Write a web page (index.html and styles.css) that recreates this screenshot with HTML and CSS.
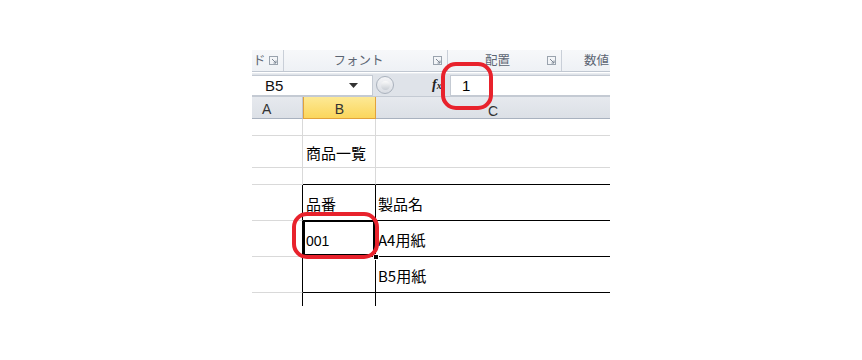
FILE: index.html
```html
<!DOCTYPE html>
<html lang="ja">
<head>
<meta charset="utf-8">
<title>Excel</title>
<link rel="stylesheet" href="styles.css">
</head>
<body>
<div class="shot">
  <div class="ribbon">
    <div class="grp g1"><span class="lbl lbl-r">ド</span><span class="launch"><svg width="9" height="9" viewBox="0 0 9 9"><rect x="0.5" y="0.5" width="8" height="8" fill="none" stroke="#9aa3ae"/><path d="M3 3 L7 7 M7 4.5 V7 H4.5" fill="none" stroke="#7d8794" stroke-width="1"/></svg></span></div>
    <div class="grp g2"><span class="lbl">フォント</span><span class="launch"><svg width="9" height="9" viewBox="0 0 9 9"><rect x="0.5" y="0.5" width="8" height="8" fill="none" stroke="#9aa3ae"/><path d="M3 3 L7 7 M7 4.5 V7 H4.5" fill="none" stroke="#7d8794" stroke-width="1"/></svg></span></div>
    <div class="grp g3"><span class="lbl">配置</span><span class="launch"><svg width="9" height="9" viewBox="0 0 9 9"><rect x="0.5" y="0.5" width="8" height="8" fill="none" stroke="#9aa3ae"/><path d="M3 3 L7 7 M7 4.5 V7 H4.5" fill="none" stroke="#7d8794" stroke-width="1"/></svg></span></div>
    <div class="grp g4"><span class="lbl">数値</span></div>
  </div>
  <div class="fbar">
    <div class="namebox"><span class="nb-text">B5</span><svg class="nb-arrow" width="9" height="5" viewBox="0 0 9 5"><path d="M0 0 H9 L4.5 5 Z" fill="#333"/></svg></div>
    <div class="knob"><span class="knob-dot"></span></div>
    <div class="fx"><i>f</i><i class="fx-x">x</i></div>
    <div class="finput">1</div>
  </div>
  <div class="sheet">
    <div class="hd hd-a">A</div>
    <div class="hd hd-b">B</div>
    <div class="hd hd-c">C</div>

    <div class="c ca"></div>
    <div class="c cb"></div>
    <div class="c cc"></div>

    <div class="c ca"></div>
    <div class="c cb txt">商品一覧</div>
    <div class="c cc"></div>

    <div class="c ca"></div>
    <div class="c cb bb"></div>
    <div class="c cc bb"></div>

    <div class="c ca br"></div>
    <div class="c cb br bb txt">品番</div>
    <div class="c cc bb txt">製品名</div>

    <div class="c ca br"></div>
    <div class="c cb br bb txt active">001<span class="sel"></span><span class="handle"></span></div>
    <div class="c cc bb txt">A4用紙</div>

    <div class="c ca br"></div>
    <div class="c cb br bb"></div>
    <div class="c cc bb txt">B5用紙</div>

    <div class="c ca br"></div>
    <div class="c cb br nb"></div>
    <div class="c cc nb"></div>
  </div>
  <div class="mark mark-fx"></div>
  <div class="mark mark-cell"></div>
</div>
</body>
</html>
```
FILE: styles.css
```css
* { box-sizing: border-box; }
html, body { margin: 0; padding: 0; background: #fff; }
body { font-family: "Liberation Sans", "Noto Sans CJK JP", sans-serif; }

.shot {
  position: relative;
  margin: 50px 0 0 252px;
  width: 358px;
  height: 256px;
  overflow: hidden;
  background: #fff;
}

/* ribbon group labels */
.ribbon {
  display: flex;
  height: 22px;
  background: linear-gradient(#f7f8fa, #eef1f5);
  border-bottom: 1px solid #c0c7d1;
  color: #5c6573;
  font-family: "Noto Sans CJK JP", sans-serif;
  font-size: 12.5px;
}
.grp {
  display: flex;
  align-items: center;
  flex: none;
  border-right: 1px solid #c9cfd8;
  padding-bottom: 2px;
}
.g1 { width: 32px; }
.g2 { width: 164px; }
.g3 { width: 114px; }
.g4 { width: 80px; border-right: 0; padding-left: 22px; }
.lbl { flex: 1; text-align: center; white-space: nowrap; }
.g4 .lbl { flex: none; }
.lbl-r { text-align: left; padding-left: 1px; }
.launch { flex: none; width: 9px; display: flex; align-items: center; margin-right: 5px; margin-top: 2px; }

/* formula bar */
.fbar {
  display: flex;
  align-items: center;
  height: 24px;
  margin-top: 1px;
  background: #dfe3e9;
  border-top: 1px solid #e9ecf0;
  border-bottom: 1px solid #c4cad3;
}
.namebox {
  display: flex;
  align-items: center;
  width: 121px;
  height: 21px;
  background: #fff;
  border: 1px solid #c4cad3;
  border-left: 0;
  padding-left: 13px;
  font-size: 15px;
  color: #111;
}
.nb-text { flex: 1; }
.nb-arrow { margin-right: 14px; }
.knob {
  width: 18px;
  height: 18px;
  margin-left: 3px;
  border-radius: 50%;
  border: 1px solid #aab2bd;
  background: linear-gradient(#f4f5f7, #d9dde3);
  display: flex;
  align-items: center;
  justify-content: center;
}
.knob-dot { width: 9px; height: 9px; border-radius: 50%; background: linear-gradient(#fafafa, #c9ced5); }
.fx {
  margin-left: 38px;
  width: 18px;
  font-family: "Liberation Serif", serif;
  font-weight: bold;
  font-size: 14px;
  color: #222;
  display: flex;
  align-items: baseline;
}
.fx-x { font-size: 10px; margin-left: 0; }
.finput {
  flex: 1;
  height: 21px;
  background: #fff;
  border: 1px solid #c4cad3;
  border-right: 0;
  padding-left: 11px;
  font-size: 15px;
  line-height: 19px;
  color: #000;
}

/* sheet grid */
.sheet {
  display: grid;
  grid-template-columns: 51px 73px 1fr;
  grid-template-rows: 22px 17px 32px 17px 36px 36px 36px 40px;
}
.hd {
  display: flex;
  align-items: center;
  justify-content: center;
  background: linear-gradient(#e6e9ee, #dce0e6);
  border-bottom: 1px solid #a9b2bf;
  border-right: 1px solid #bfc6d0;
  font-size: 14px;
  color: #333;
  padding-top: 2px;
}
.hd-a { justify-content: flex-start; padding-left: 10px; }
.hd-b {
  background: linear-gradient(#fde995, #fbd65c);
  border: 1px solid #e2a23b;
  border-top: 0;
}
.hd-c { border-right: 0; padding-top: 6px; }

.c {
  border-right: 1px solid #d9d9d9;
  border-bottom: 1px solid #d9d9d9;
  display: flex;
  align-items: center;
  font-family: "Noto Sans CJK JP", sans-serif;
  font-size: 15px;
  color: #000;
}
.cc { border-right: 0; }
.br { border-right-color: #000; }
.bb { border-bottom-color: #000; }
.nb { border-bottom: 0; }
.txt { padding-left: 2px; padding-top: 1px; }
.cb.txt { padding-left: 3px; }
.active {
  position: relative;
  font-family: "Liberation Sans", sans-serif;
  font-size: 14px;
  padding-top: 4px;
}
.sel {
  position: absolute;
  left: 0;
  top: -1px;
  right: 0;
  bottom: 0;
  border: 2px solid #000;
  box-shadow: inset 0 0 0 1px #fff;
}
.handle {
  position: absolute;
  right: -4px;
  bottom: -4px;
  width: 6px;
  height: 6px;
  background: #000;
  border: 1px solid #fff;
}

/* red annotation marks */
.mark {
  position: absolute;
  border: 4.5px solid #e8222c;
  border-radius: 15px;
}
.mark-fx { left: 189px; top: 12px; width: 52px; height: 48px; }
.mark-cell { left: 40px; top: 162px; width: 87px; height: 47px; }
```
